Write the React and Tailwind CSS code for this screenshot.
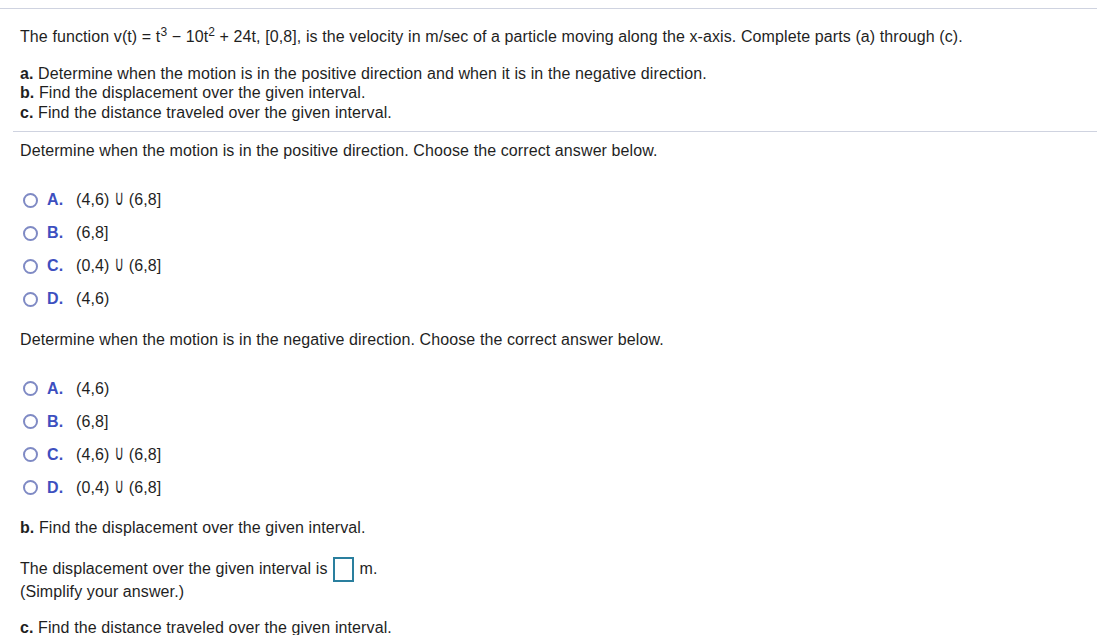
import React from 'react'

function Value({ text }) {
  const parts = text.split('\u222A')
  return (
    <span>
      {parts.map((p, i) => (
        <React.Fragment key={i}>
          {i > 0 && (
            <span
              className="inline-block text-[14px] leading-none scale-y-[1.5] scale-x-[0.9] origin-[50%_85%]"
              style={{ fontFamily: '"DejaVu Sans", sans-serif' }}
            >
              {'\u222A'}
            </span>
          )}
          {p}
        </React.Fragment>
      ))}
    </span>
  )
}

function Radio({ letter, value }) {
  return (
    <div className="flex items-center h-[33px]">
      <span className="ml-[3px] w-[15px] h-[15px] rounded-full border-2 border-[#7f8ac4]" />
      <span className="ml-[9px] w-[29px] font-bold text-[#3d4fbf]">{letter}.</span>
      <Value text={value} />
    </div>
  )
}

export default function App() {
  const pos = [
    ['A', '(4,6) \u222A (6,8]'],
    ['B', '(6,8]'],
    ['C', '(0,4) \u222A (6,8]'],
    ['D', '(4,6)'],
  ]
  const neg = [
    ['A', '(4,6)'],
    ['B', '(6,8]'],
    ['C', '(4,6) \u222A (6,8]'],
    ['D', '(0,4) \u222A (6,8]'],
  ]

  return (
    <div
      className="w-[1097px] h-[635px] overflow-hidden bg-white text-[16px] tracking-[0.1px] text-[#1f1f1f] leading-[19.5px]"
      style={{ fontFamily: '"Liberation Sans", Arial, sans-serif' }}
    >
      <div className="h-[8px]" />
      <div className="border-t border-[#cfd3e0]" />
      <div className="px-[20px] pt-[18px]">
        <p>
          The function v(t) = t<sup>3</sup> − 10t<sup>2</sup> + 24t, [0,8], is the velocity in m/sec of a particle moving along the x-axis. Complete parts (a) through (c).
        </p>
        <div className="mt-[17px]">
          <p><b>a.</b> Determine when the motion is in the positive direction and when it is in the negative direction.</p>
          <p><b>b.</b> Find the displacement over the given interval.</p>
          <p><b>c.</b> Find the distance traveled over the given interval.</p>
        </div>
      </div>
      <div className="ml-[13px] mt-[9px] border-t border-[#cfd3e0]" />
      <div className="px-[20px] pt-[9px]">
        <p>Determine when the motion is in the positive direction. Choose the correct answer below.</p>
        <div className="mt-[23px]">
          {pos.map(([l, v]) => <Radio key={l} letter={l} value={v} />)}
        </div>
        <p className="mt-[14px]">Determine when the motion is in the negative direction. Choose the correct answer below.</p>
        <div className="mt-[23px]">
          {neg.map(([l, v]) => <Radio key={l} letter={l} value={v} />)}
        </div>
        <p className="mt-[14px]"><b>b.</b> Find the displacement over the given interval.</p>
        <div className="mt-[19px] flex items-center">
          <span>The displacement over the given interval is</span>
          <span className="ml-[5px] w-[21px] h-[25px] border-2 border-[#2a7f9e]" />
          <span className="ml-[6px]">m.</span>
        </div>
        <p>(Simplify your answer.)</p>
        <p className="mt-[17px]"><b>c.</b> Find the distance traveled over the given interval.</p>
      </div>
    </div>
  )
}
